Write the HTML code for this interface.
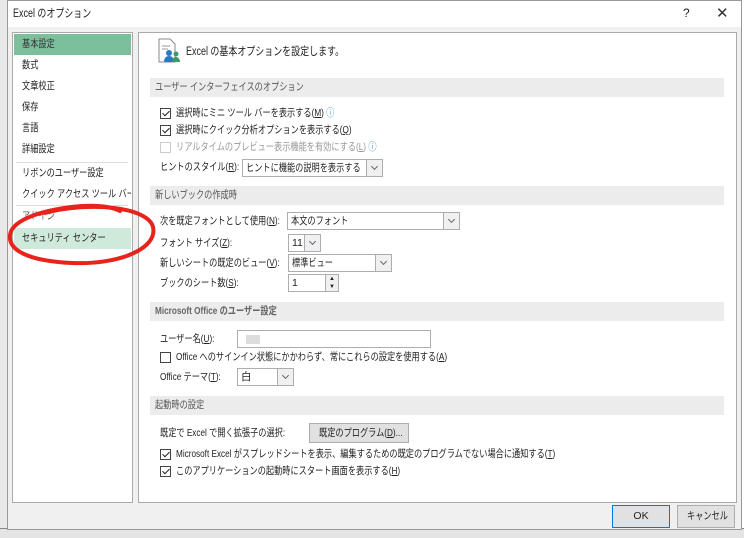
<!DOCTYPE html>
<html><head><meta charset="utf-8"><style>
*{margin:0;padding:0;box-sizing:border-box}
body{width:744px;height:538px;overflow:hidden;background:#fff;font-family:"Liberation Sans","Noto Sans CJK JP",sans-serif;font-size:10.5px;color:#222;position:relative}
.a{position:absolute}
.t{position:absolute;white-space:nowrap;line-height:14px;transform:scaleX(0.78);transform-origin:0 0}
.s{display:inline-block;white-space:nowrap;transform:scaleX(0.78);transform-origin:0 0}
.sec{position:absolute;left:150px;width:574px;height:19px;background:#ececec;color:#555;padding-left:5px;line-height:19px;white-space:nowrap}
.cb{position:absolute;width:11px;height:11px;border:1px solid #444;background:#fff}
.cb.on::after{content:"";position:absolute;left:3px;top:0px;width:3px;height:6px;border:solid #222;border-width:0 1.5px 1.5px 0;transform:rotate(45deg)}
.sel{position:absolute;border:1px solid #abadb3;background:#fff;padding-left:3px;line-height:16px;overflow:hidden;white-space:nowrap}
.dd{position:absolute;right:0;top:0;bottom:0;width:16px;border-left:1px solid #abadb3;background:#f0f0f0}
.dd::after{content:"";position:absolute;left:5px;top:4px;width:4px;height:4px;border:solid #666;border-width:0 1px 1px 0;transform:rotate(45deg)}
.li{position:absolute;left:14px;width:117px;height:21px;line-height:21px;padding-left:8px;white-space:nowrap;overflow:hidden}
u{text-decoration:underline}
</style></head><body>
<div class="a" style="left:0;top:0;width:8px;height:538px;background:#e8e8e8"></div>
<div class="a" style="left:0;top:528px;width:744px;height:10px;background:#e4e4e4;border-top:1px solid #888"></div>
<div class="a" style="left:7px;top:0;width:735px;height:530px;background:#f0f0f0;border:1px solid #999"></div>
<div class="a" style="left:8px;top:1px;width:733px;height:26px;background:#fff"></div>
<div class="t" style="left:13px;top:7px;font-size:11.5px">Excel のオプション</div>
<div class="a" style="left:683px;top:6px;font-size:12px">?</div>
<div class="a" style="left:716px;top:4px;font-size:15px;color:#333">✕</div>
<!-- left panel -->
<div class="a" style="left:12px;top:32px;width:121px;height:471px;background:#fff;border:1px solid #aaa"></div>
<div class="li" style="top:34px;background:#7cbf9c;color:#333"><span class="s">基本設定</span></div>
<div class="li" style="top:55px"><span class="s">数式</span></div>
<div class="li" style="top:76px"><span class="s">文章校正</span></div>
<div class="li" style="top:97px"><span class="s">保存</span></div>
<div class="li" style="top:118px"><span class="s">言語</span></div>
<div class="li" style="top:139px"><span class="s">詳細設定</span></div>
<div class="a" style="left:16px;top:162px;width:112px;height:1px;background:#ddd"></div>
<div class="li" style="top:163px"><span class="s">リボンのユーザー設定</span></div>
<div class="li" style="top:184px"><span class="s">クイック アクセス ツール バー</span></div>
<div class="a" style="left:16px;top:205px;width:112px;height:1px;background:#ddd"></div>
<div class="li" style="top:206px;color:#555"><span class="s">アドイン</span></div>
<div class="li" style="top:228px;background:#cfeadb"><span class="s">セキュリティ センター</span></div>
<!-- right panel -->
<div class="a" style="left:138px;top:32px;width:599px;height:471px;background:#fff;border:1px solid #aaa"></div>
<svg class="a" style="left:157px;top:38px" width="26" height="26"><path d="M2 1h11l5 5v18H2z" fill="#fff" stroke="#888"/><path d="M5 8h8M5 11h6" stroke="#999"/><circle cx="12" cy="15" r="3" fill="#2b79c2"/><path d="M7 24c0-4 2-6 5-6s5 2 5 6z" fill="#2b79c2"/><circle cx="19" cy="16" r="2.5" fill="#3a9a6a"/><path d="M15 24c0-3 2-5 4-5s4 2 4 5z" fill="#3a9a6a"/></svg>
<div class="t" style="left:186px;top:45px;font-size:11.5px">Excel の基本オプションを設定します。</div>
<div class="sec" style="top:78px"><span class="s">ユーザー インターフェイスのオプション</span></div>
<div class="cb on" style="left:160px;top:108px"></div><div class="t" style="left:176px;top:106px">選択時にミニ ツール バーを表示する(<u>M</u>) <span style="color:#4a90d9">ⓘ</span></div>
<div class="cb on" style="left:160px;top:125px"></div><div class="t" style="left:176px;top:123px">選択時にクイック分析オプションを表示する(<u>Q</u>)</div>
<div class="cb" style="left:160px;top:142px;border-color:#ccc"></div><div class="t" style="left:176px;top:140px;color:#999">リアルタイムのプレビュー表示機能を有効にする(<u>L</u>) <span style="color:#4a90d9">ⓘ</span></div>
<div class="t" style="left:160px;top:160px">ヒントのスタイル(<u>R</u>):</div>
<div class="sel" style="left:242px;top:159px;width:141px;height:18px"><span class="s">ヒントに機能の説明を表示する</span><div class="dd"></div></div>
<div class="sec" style="top:186px"><span class="s">新しいブックの作成時</span></div>
<div class="t" style="left:160px;top:214px">次を既定フォントとして使用(<u>N</u>):</div>
<div class="sel" style="left:287px;top:212px;width:173px;height:18px"><span class="s">本文のフォント</span><div class="dd"></div></div>
<div class="t" style="left:160px;top:236px">フォント サイズ(<u>Z</u>):</div>
<div class="sel" style="left:288px;top:234px;width:33px;height:18px">11<div class="dd"></div></div>
<div class="t" style="left:160px;top:256px">新しいシートの既定のビュー(<u>V</u>):</div>
<div class="sel" style="left:288px;top:254px;width:104px;height:18px"><span class="s">標準ビュー</span><div class="dd"></div></div>
<div class="t" style="left:160px;top:276px">ブックのシート数(<u>S</u>):</div>
<div class="sel" style="left:288px;top:274px;width:51px;height:18px">1<div class="a" style="right:0;top:0;bottom:0;width:13px;border-left:1px solid #abadb3;background:#f0f0f0;font-size:6px;line-height:8px;text-align:center">▲<br>▼</div></div>
<div class="sec" style="top:302px;font-weight:bold;color:#666"><span class="s">Microsoft Office のユーザー設定</span></div>
<div class="t" style="left:160px;top:332px">ユーザー名(<u>U</u>):</div>
<div class="sel" style="left:237px;top:330px;width:194px;height:18px"><div class="a" style="left:8px;top:4px;width:14px;height:9px;background:#ddd"></div></div>
<div class="cb" style="left:160px;top:352px"></div><div class="t" style="left:176px;top:350px">Office へのサインイン状態にかかわらず、常にこれらの設定を使用する(<u>A</u>)</div>
<div class="t" style="left:160px;top:370px">Office テーマ(<u>T</u>):</div>
<div class="sel" style="left:237px;top:368px;width:57px;height:18px">白<div class="dd"></div></div>
<div class="sec" style="top:396px"><span class="s">起動時の設定</span></div>
<div class="t" style="left:160px;top:426px">既定で Excel で開く拡張子の選択:</div>
<div class="a" style="left:309px;top:423px;width:100px;height:20px;background:#e1e1e1;border:1px solid #adadad;line-height:18px;padding-left:9px;white-space:nowrap"><span class="s">既定のプログラム(<u>D</u>)...</span></div>
<div class="cb on" style="left:160px;top:449px"></div><div class="t" style="left:176px;top:447px">Microsoft Excel がスプレッドシートを表示、編集するための既定のプログラムでない場合に通知する(<u>T</u>)</div>
<div class="cb on" style="left:160px;top:466px"></div><div class="t" style="left:176px;top:464px">このアプリケーションの起動時にスタート画面を表示する(<u>H</u>)</div>
<div class="a" style="left:612px;top:505px;width:58px;height:23px;background:#e1e1e1;border:1px solid #0078d7;text-align:center;line-height:21px">OK</div>
<div class="a" style="left:677px;top:505px;width:58px;height:23px;background:#e1e1e1;border:1px solid #adadad;line-height:21px;padding-left:9px;white-space:nowrap"><span class="s">キャンセル</span></div>
<svg class="a" style="left:0;top:195px" width="170" height="80"><path d="M45 18 C90 6 148 12 153 32 C158 54 118 70 72 68 C30 66 8 56 10 40 C12 24 45 14 82 11 C100 10 112 12 120 16" fill="none" stroke="#e8231b" stroke-width="4" stroke-linecap="round"/></svg>
</body></html>
